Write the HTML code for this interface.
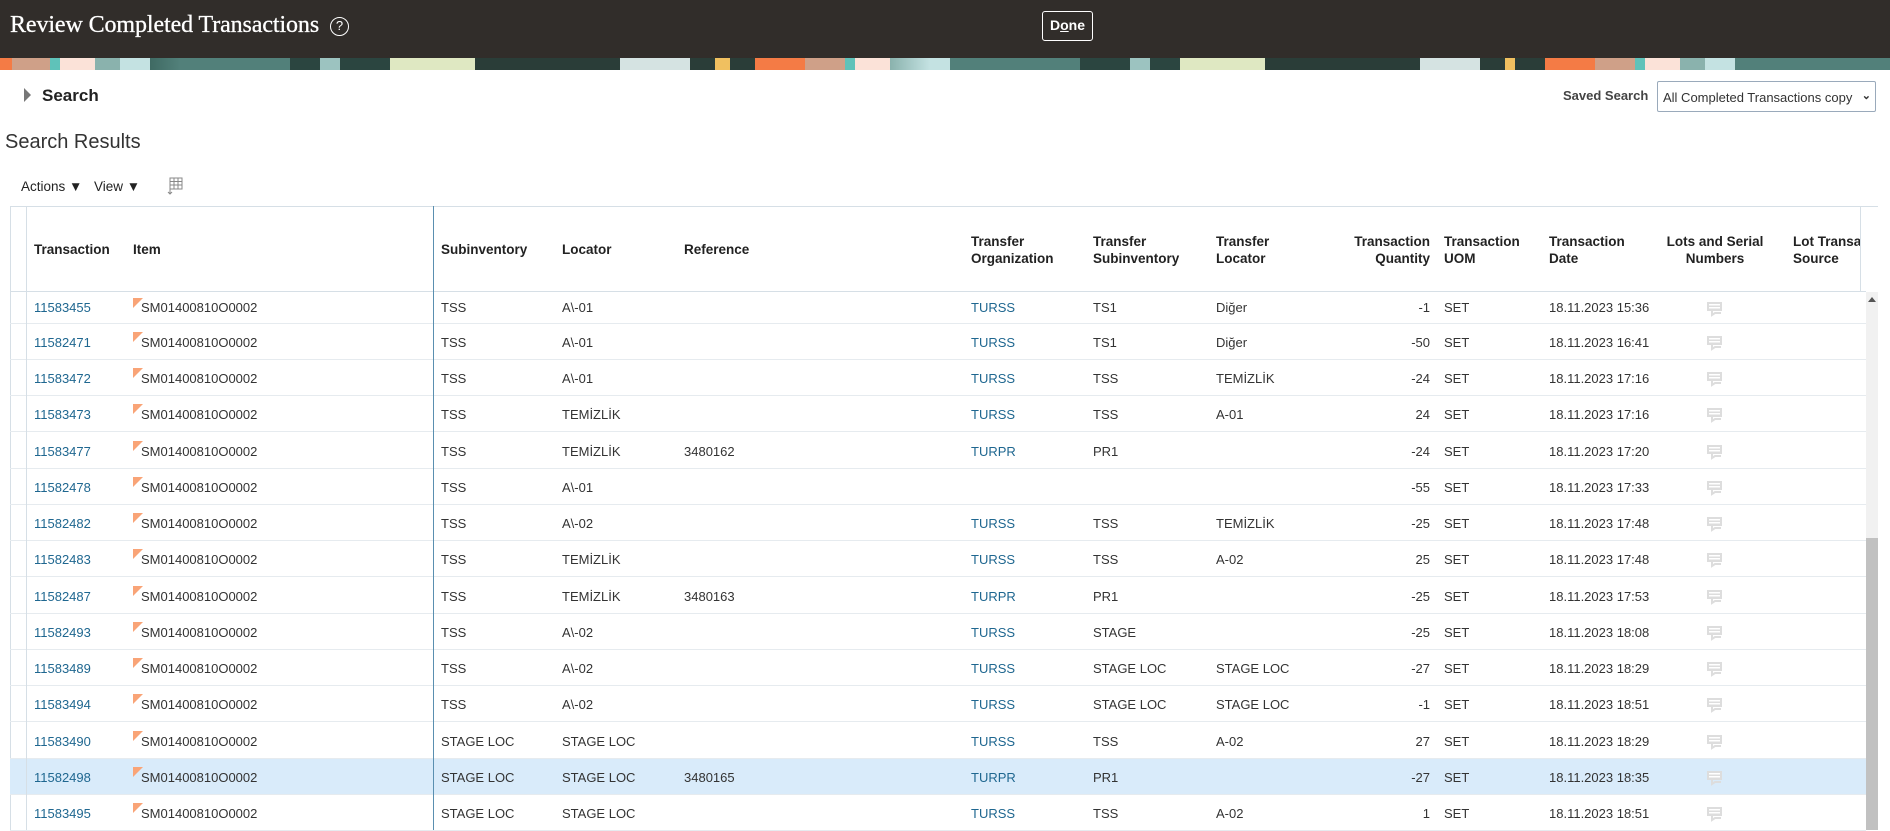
<!DOCTYPE html>
<html><head><meta charset="utf-8">
<style>
*{margin:0;padding:0;box-sizing:border-box}
body{width:1890px;height:830px;overflow:hidden;background:#fff;font-family:"Liberation Sans",Arial,sans-serif;color:#333;position:relative}
.hdr{position:absolute;left:0;top:0;width:1890px;height:58px;background:#312d2a}
.title{position:absolute;left:10px;top:12px;font-family:"Liberation Serif",serif;font-size:24px;color:#fff;letter-spacing:-0.1px;-webkit-text-stroke:0.3px #fff}
.help{position:absolute;left:330px;top:17px;width:19px;height:19px;border:1.5px solid #fff;border-radius:50%;color:#fff;font-size:13px;text-align:center;line-height:16px}
.done{position:absolute;left:1042px;top:11px;width:51px;height:30px;border:1.5px solid #fff;border-radius:3px;color:#fff;font-weight:bold;font-size:14px;text-align:center;line-height:27px}
.banner{position:absolute;left:0;top:58px;width:1890px;height:12px;background:linear-gradient(90deg,#f47b45 0,#f47b45 12px,#cfa088 12px,#cfa088 50px,#5fc2b9 50px,#5fc2b9 60px,#fbe2d8 60px,#fbe2d8 95px,#8ab2ad 95px,#8ab2ad 120px,#c4e2e2 120px,#c4e2e2 150px,#3f6a63 150px,#52807a 180px,#52807a 290px,#2b4540 290px,#2b4540 320px,#9cc3c0 320px,#9cc3c0 340px,#2b4540 340px,#2b4540 390px,#dfe8c2 390px,#dfe8c2 475px,#2a3d38 475px,#2a3d38 620px,#d5e3e2 620px,#d5e3e2 690px,#2a3d38 690px,#2a3d38 715px,#f0c060 715px,#f0c060 730px,#2a3d38 730px,#2a3d38 755px,#f47b45 755px,#f47b45 805px,#cfa088 805px,#cfa088 845px,#5fc2b9 845px,#5fc2b9 855px,#fbe2d8 855px,#fbe2d8 890px,#8ab2ad 890px,#c4e2e2 930px,#c4e2e2 950px,#52807a 950px,#52807a 1080px,#2b4540 1080px,#2b4540 1130px,#9cc3c0 1130px,#9cc3c0 1150px,#2b4540 1150px,#2b4540 1180px,#dfe8c2 1180px,#dfe8c2 1265px,#2a3d38 1265px,#2a3d38 1420px,#d5e3e2 1420px,#d5e3e2 1480px,#2a3d38 1480px,#2a3d38 1505px,#f0c060 1505px,#f0c060 1515px,#2a3d38 1515px,#2a3d38 1545px,#f47b45 1545px,#f47b45 1595px,#cfa088 1595px,#cfa088 1635px,#5fc2b9 1635px,#5fc2b9 1645px,#fbe2d8 1645px,#fbe2d8 1680px,#8ab2ad 1680px,#8ab2ad 1705px,#c4e2e2 1705px,#c4e2e2 1735px,#52807a 1735px,#52807a 1890px)}
.srch{position:absolute;left:24px;top:86px;font-size:17px;font-weight:bold;color:#222}
.tri{position:absolute;left:24px;top:88px;width:0;height:0;border-top:7px solid transparent;border-bottom:7px solid transparent;border-left:7px solid #777}
.srch span{margin-left:18px}
.ssl{position:absolute;left:1563px;top:88px;font-size:13px;font-weight:bold;color:#444}
.sel{position:absolute;left:1657px;top:81px;width:219px;height:31px;border:1px solid #9aaabb;border-radius:2px;font-size:13px;color:#333;padding:8px 0 0 5px;background:#fff}
.sel b{position:absolute;right:4px;top:7px;font-size:11px}
.sr{position:absolute;left:5px;top:131px;font-size:20px;color:#333}
.tb{position:absolute;top:179px;font-size:13.5px;color:#222}
.grid{position:absolute;left:10px;top:206px;width:1868px;height:624px;border-top:1px solid #d6dfe6;border-left:1px solid #d6dfe6}
.vl{position:absolute;left:26px;top:206px;width:1px;height:624px;background:#d6dfe6}
.fz{position:absolute;left:433px;top:206px;width:1px;height:624px;background:#5a8fb0}
.hb{position:absolute;left:10px;top:291px;width:1856px;height:1px;background:#d6dfe6}
.rb{position:absolute;left:1860px;top:206px;width:1px;height:85px;background:#d6dfe6}
.h{position:absolute;font-size:13.5px;font-weight:bold;color:#222;line-height:17px}
.row{position:absolute;left:10px;width:1856px;height:36px;border-bottom:1px solid #e6ebef;font-size:13px}
.row span{position:absolute;top:11px;white-space:nowrap}
.sel2{background:#d9ebfa}
.a{color:#1f6790}
.ic{position:absolute;top:8px;width:0;height:0;border-top:10px solid #f9a477;border-right:10px solid transparent}
.sb{position:absolute;left:1866px;top:292px;width:12px;height:538px;background:#f1f1f1}
.th{position:absolute;left:1866px;top:538px;width:12px;height:292px;background:#c1c1c1}
.up{position:absolute;left:1868px;top:297px;border-left:4px solid transparent;border-right:4px solid transparent;border-bottom:5px solid #555}
</style></head><body>
<div class="hdr"><div class="title">Review Completed Transactions</div><div class="help">?</div><div class="done">D<u>o</u>ne</div></div>
<div class="banner"></div>
<div class="tri"></div><div class="srch"><span>Search</span></div>
<div class="ssl">Saved Search</div>
<div class="sel">All Completed Transactions copy<b>&#8964;</b></div>
<div class="sr">Search Results</div>
<div class="tb" style="left:21px">Actions &#9660;</div>
<div class="tb" style="left:94px">View &#9660;</div>
<svg style="position:absolute;left:167px;top:177px" width="16" height="18" viewBox="0 0 16 18"><rect x="3" y="1" width="12" height="11" fill="none" stroke="#888"/><path d="M3 4.5h12M3 8h12M7 1v11M11 1v11" stroke="#888"/><path d="M3 12v5M1 15l2 2 2-2" stroke="#888" fill="none"/></svg>
<div class="grid"></div><div class="vl"></div><div class="hb"></div><div class="rb"></div>
<div class="h" style="left:34px;top:241px">Transaction</div>
<div class="h" style="left:133px;top:241px">Item</div>
<div class="h" style="left:441px;top:241px">Subinventory</div>
<div class="h" style="left:562px;top:241px">Locator</div>
<div class="h" style="left:684px;top:241px">Reference</div>
<div class="h" style="left:971px;top:233px">Transfer<br>Organization</div>
<div class="h" style="left:1093px;top:233px">Transfer<br>Subinventory</div>
<div class="h" style="left:1216px;top:233px">Transfer<br>Locator</div>
<div class="h" style="left:1330px;top:233px;width:100px;text-align:right">Transaction<br>Quantity</div>
<div class="h" style="left:1444px;top:233px">Transaction<br>UOM</div>
<div class="h" style="left:1549px;top:233px">Transaction<br>Date</div>
<div class="h" style="left:1665px;top:233px;width:100px;text-align:center">Lots and Serial<br>Numbers</div>
<div class="h" style="left:1793px;top:233px;width:67px;overflow:hidden;white-space:nowrap">Lot Transa<br>Source</div>
<div class="row" style="top:292px;height:32px"><span class="a" style="left:24px;top:8px">11583455</span><i class="ic" style="left:123px;top:6px"></i><span style="left:131px;top:8px">SM01400810O0002</span><span style="left:431px;top:8px">TSS</span><span style="left:552px;top:8px">A\-01</span><span class="a" style="left:961px;top:8px">TURSS</span><span style="left:1083px;top:8px">TS1</span><span style="left:1206px;top:8px">Diğer</span><span style="left:1320px;width:100px;text-align:right;top:8px">-1</span><span style="left:1434px;top:8px">SET</span><span style="left:1539px;top:8px">18.11.2023 15:36</span></div>
<div class="row" style="top:324px"><span class="a" style="left:24px">11582471</span><i class="ic" style="left:123px"></i><span style="left:131px">SM01400810O0002</span><span style="left:431px">TSS</span><span style="left:552px">A\-01</span><span class="a" style="left:961px">TURSS</span><span style="left:1083px">TS1</span><span style="left:1206px">Diğer</span><span style="left:1320px;width:100px;text-align:right">-50</span><span style="left:1434px">SET</span><span style="left:1539px">18.11.2023 16:41</span></div>
<div class="row" style="top:360px"><span class="a" style="left:24px">11583472</span><i class="ic" style="left:123px"></i><span style="left:131px">SM01400810O0002</span><span style="left:431px">TSS</span><span style="left:552px">A\-01</span><span class="a" style="left:961px">TURSS</span><span style="left:1083px">TSS</span><span style="left:1206px">TEMİZLİK</span><span style="left:1320px;width:100px;text-align:right">-24</span><span style="left:1434px">SET</span><span style="left:1539px">18.11.2023 17:16</span></div>
<div class="row" style="top:396px"><span class="a" style="left:24px">11583473</span><i class="ic" style="left:123px"></i><span style="left:131px">SM01400810O0002</span><span style="left:431px">TSS</span><span style="left:552px">TEMİZLİK</span><span class="a" style="left:961px">TURSS</span><span style="left:1083px">TSS</span><span style="left:1206px">A-01</span><span style="left:1320px;width:100px;text-align:right">24</span><span style="left:1434px">SET</span><span style="left:1539px">18.11.2023 17:16</span></div>
<div class="row" style="top:433px"><span class="a" style="left:24px">11583477</span><i class="ic" style="left:123px"></i><span style="left:131px">SM01400810O0002</span><span style="left:431px">TSS</span><span style="left:552px">TEMİZLİK</span><span style="left:674px">3480162</span><span class="a" style="left:961px">TURPR</span><span style="left:1083px">PR1</span><span style="left:1320px;width:100px;text-align:right">-24</span><span style="left:1434px">SET</span><span style="left:1539px">18.11.2023 17:20</span></div>
<div class="row" style="top:469px"><span class="a" style="left:24px">11582478</span><i class="ic" style="left:123px"></i><span style="left:131px">SM01400810O0002</span><span style="left:431px">TSS</span><span style="left:552px">A\-01</span><span style="left:1320px;width:100px;text-align:right">-55</span><span style="left:1434px">SET</span><span style="left:1539px">18.11.2023 17:33</span></div>
<div class="row" style="top:505px"><span class="a" style="left:24px">11582482</span><i class="ic" style="left:123px"></i><span style="left:131px">SM01400810O0002</span><span style="left:431px">TSS</span><span style="left:552px">A\-02</span><span class="a" style="left:961px">TURSS</span><span style="left:1083px">TSS</span><span style="left:1206px">TEMİZLİK</span><span style="left:1320px;width:100px;text-align:right">-25</span><span style="left:1434px">SET</span><span style="left:1539px">18.11.2023 17:48</span></div>
<div class="row" style="top:541px"><span class="a" style="left:24px">11582483</span><i class="ic" style="left:123px"></i><span style="left:131px">SM01400810O0002</span><span style="left:431px">TSS</span><span style="left:552px">TEMİZLİK</span><span class="a" style="left:961px">TURSS</span><span style="left:1083px">TSS</span><span style="left:1206px">A-02</span><span style="left:1320px;width:100px;text-align:right">25</span><span style="left:1434px">SET</span><span style="left:1539px">18.11.2023 17:48</span></div>
<div class="row" style="top:578px"><span class="a" style="left:24px">11582487</span><i class="ic" style="left:123px"></i><span style="left:131px">SM01400810O0002</span><span style="left:431px">TSS</span><span style="left:552px">TEMİZLİK</span><span style="left:674px">3480163</span><span class="a" style="left:961px">TURPR</span><span style="left:1083px">PR1</span><span style="left:1320px;width:100px;text-align:right">-25</span><span style="left:1434px">SET</span><span style="left:1539px">18.11.2023 17:53</span></div>
<div class="row" style="top:614px"><span class="a" style="left:24px">11582493</span><i class="ic" style="left:123px"></i><span style="left:131px">SM01400810O0002</span><span style="left:431px">TSS</span><span style="left:552px">A\-02</span><span class="a" style="left:961px">TURSS</span><span style="left:1083px">STAGE</span><span style="left:1320px;width:100px;text-align:right">-25</span><span style="left:1434px">SET</span><span style="left:1539px">18.11.2023 18:08</span></div>
<div class="row" style="top:650px"><span class="a" style="left:24px">11583489</span><i class="ic" style="left:123px"></i><span style="left:131px">SM01400810O0002</span><span style="left:431px">TSS</span><span style="left:552px">A\-02</span><span class="a" style="left:961px">TURSS</span><span style="left:1083px">STAGE LOC</span><span style="left:1206px">STAGE LOC</span><span style="left:1320px;width:100px;text-align:right">-27</span><span style="left:1434px">SET</span><span style="left:1539px">18.11.2023 18:29</span></div>
<div class="row" style="top:686px"><span class="a" style="left:24px">11583494</span><i class="ic" style="left:123px"></i><span style="left:131px">SM01400810O0002</span><span style="left:431px">TSS</span><span style="left:552px">A\-02</span><span class="a" style="left:961px">TURSS</span><span style="left:1083px">STAGE LOC</span><span style="left:1206px">STAGE LOC</span><span style="left:1320px;width:100px;text-align:right">-1</span><span style="left:1434px">SET</span><span style="left:1539px">18.11.2023 18:51</span></div>
<div class="row" style="top:723px"><span class="a" style="left:24px">11583490</span><i class="ic" style="left:123px"></i><span style="left:131px">SM01400810O0002</span><span style="left:431px">STAGE LOC</span><span style="left:552px">STAGE LOC</span><span class="a" style="left:961px">TURSS</span><span style="left:1083px">TSS</span><span style="left:1206px">A-02</span><span style="left:1320px;width:100px;text-align:right">27</span><span style="left:1434px">SET</span><span style="left:1539px">18.11.2023 18:29</span></div>
<div class="row sel2" style="top:759px"><span class="a" style="left:24px">11582498</span><i class="ic" style="left:123px"></i><span style="left:131px">SM01400810O0002</span><span style="left:431px">STAGE LOC</span><span style="left:552px">STAGE LOC</span><span style="left:674px">3480165</span><span class="a" style="left:961px">TURPR</span><span style="left:1083px">PR1</span><span style="left:1320px;width:100px;text-align:right">-27</span><span style="left:1434px">SET</span><span style="left:1539px">18.11.2023 18:35</span></div>
<div class="row" style="top:795px"><span class="a" style="left:24px">11583495</span><i class="ic" style="left:123px"></i><span style="left:131px">SM01400810O0002</span><span style="left:431px">STAGE LOC</span><span style="left:552px">STAGE LOC</span><span class="a" style="left:961px">TURSS</span><span style="left:1083px">TSS</span><span style="left:1206px">A-02</span><span style="left:1320px;width:100px;text-align:right">1</span><span style="left:1434px">SET</span><span style="left:1539px">18.11.2023 18:51</span></div>
<svg style="position:absolute;left:0;top:0;pointer-events:none" width="1890" height="830">
<defs><g id="li"><rect x="0" y="0" width="15" height="9" fill="#ddd"/><rect x="2" y="2" width="11" height="1.5" fill="#fff"/><rect x="2" y="5" width="11" height="1.5" fill="#fff"/><path d="M5 9v4l3-2h6" stroke="#ddd" stroke-width="2" fill="none"/></g></defs>
<use href="#li" x="1707" y="302"/><use href="#li" x="1707" y="336"/><use href="#li" x="1707" y="372"/><use href="#li" x="1707" y="408"/><use href="#li" x="1707" y="445"/><use href="#li" x="1707" y="481"/><use href="#li" x="1707" y="517"/><use href="#li" x="1707" y="553"/><use href="#li" x="1707" y="590"/><use href="#li" x="1707" y="626"/><use href="#li" x="1707" y="662"/><use href="#li" x="1707" y="698"/><use href="#li" x="1707" y="735"/><use href="#li" x="1707" y="771"/><use href="#li" x="1707" y="807"/>
</svg>
<div class="vl"></div><div class="fz"></div>
<div class="sb"></div><div class="th"></div><div class="up"></div>
</body></html>
